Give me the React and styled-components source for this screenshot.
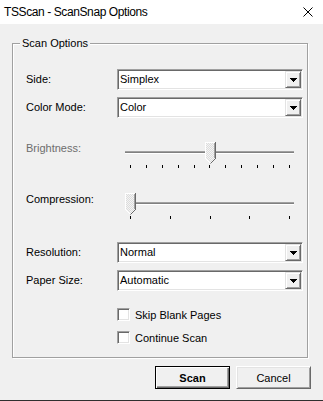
import React, { useId } from "react";
import styled, { createGlobalStyle, css } from "styled-components";

const GlobalStyle = createGlobalStyle`
  html, body {
    margin: 0;
    padding: 0;
    background: #f0f0f0;
  }
  body {
    font-family: "Liberation Sans", Arial, sans-serif;
    font-size: 11px;
    color: #000;
  }
  * {
    box-sizing: border-box;
  }
`;

const Window = styled.div`
  width: 323px;
  height: 401px;
  background: #f0f0f0;
  border-bottom: 1px solid #2f2f2f;
  display: flex;
  flex-direction: column;
`;

const TitleBar = styled.div`
  height: 24px;
  background: #fff;
  display: flex;
  align-items: center;
  justify-content: space-between;
  padding: 0 10px 0 4px;
`;

const Title = styled.span`
  font-size: 12px;
  letter-spacing: -0.4px;
  color: #000;
`;

const Body = styled.div`
  padding: 13px 15px 0 12px;
`;

const GroupBox = styled.fieldset`
  margin: 0;
  padding: 0;
  min-width: 0;
  border: 1px solid #a0a0a0;
  box-shadow: 1px 1px 0 #fff, inset 1px 1px 0 #fff;
`;

const Legend = styled.legend`
  margin-left: 7px;
  padding: 0 2px;
  line-height: 13px;
  background: #f0f0f0;
`;

const Rows = styled.div`
  display: flex;
  flex-direction: column;
  padding: 19px 4px 13px 13px;
`;

const Row = styled.div`
  display: grid;
  grid-template-columns: 91px 186px;
  align-items: ${p => (p.$top ? "start" : "center")};
  margin-top: ${p => p.$space || 0}px;
`;

const Label = styled.span`
  line-height: 13px;
  color: ${p => (p.$disabled ? "#6d6d6d" : "#000")};
`;

const Combo = styled.div`
  height: 21px;
  display: flex;
  background: #fff;
  padding: 1px;
  border: 1px solid;
  border-color: #a0a0a0 #fff #fff #a0a0a0;
  box-shadow: inset 1px 1px 0 #696969, inset -1px -1px 0 #e3e3e3;
`;

const ComboText = styled.span`
  flex: 1;
  padding-left: 1px;
  line-height: 17px;
`;

const DropButton = styled.span`
  width: 16px;
  height: 17px;
  display: flex;
  align-items: center;
  justify-content: center;
  background: #f0f0f0;
  border: 1px solid;
  border-color: #e3e3e3 #696969 #696969 #e3e3e3;
  box-shadow: inset 1px 1px 0 #fff, inset -1px -1px 0 #a0a0a0;
`;

const SliderBox = styled.div`
  position: relative;
  width: 169px;
  height: 28px;
  margin-left: 8px;
`;

const Track = styled.div`
  margin-top: 9px;
  height: 3px;
  border-top: 1px solid #a0a0a0;
  border-bottom: 1px solid #fff;
  background: #808080;
`;

const Ticks = styled.div`
  display: flex;
  justify-content: space-between;
  width: 160px;
  height: 3px;
  margin: 11px 0 0 5px;
`;

const Tick = styled.span`
  width: 1px;
  height: 3px;
  background: #000;
`;

const ThumbSvg = styled.svg`
  position: absolute;
  top: 0;
  display: block;
`;

const CheckRow = styled.label`
  display: flex;
  align-items: center;
  gap: 5px;
  height: 13px;
  margin-left: 91px;
  margin-top: ${p => p.$space || 0}px;
`;

const CheckBox = styled.span`
  width: 13px;
  height: 13px;
  background: #fff;
  border: 1px solid;
  border-color: #a0a0a0 #fff #fff #a0a0a0;
  box-shadow: inset 1px 1px 0 #696969, inset -1px -1px 0 #e3e3e3;
`;

const ButtonBar = styled.div`
  display: flex;
  justify-content: flex-end;
  gap: 6px;
  padding: 8px 12px 0 0;
`;

const Button = styled.button`
  width: 75px;
  height: 23px;
  padding: 0;
  font-family: "Liberation Sans", Arial, sans-serif;
  font-size: 11px;
  color: #000;
  background: #f0f0f0;
  ${p =>
    p.$default
      ? css`
          font-weight: bold;
          border: 1px solid #000;
          box-shadow: inset 1px 1px 0 #fff, inset -1px -1px 0 #696969,
            inset -2px -2px 0 #a0a0a0;
        `
      : css`
          border: 1px solid;
          border-color: #fff #696969 #696969 #fff;
          box-shadow: inset 1px 1px 0 #e3e3e3, inset -1px -1px 0 #a0a0a0;
        `}
`;

function ComboBox({ value }) {
  return (
    <Combo>
      <ComboText>{value}</ComboText>
      <DropButton>
        <svg width="7" height="4" viewBox="0 0 7 4" shapeRendering="crispEdges">
          <path d="M0 0H7V1H6V2H5V3H4V4H3V3H2V2H1V1H0Z" fill="#000" />
        </svg>
      </DropButton>
    </Combo>
  );
}

function Thumb({ left }) {
  const id = useId().replace(/:/g, "");
  return (
    <ThumbSvg width="11" height="22" viewBox="0 0 11 22" style={{ left }} shapeRendering="crispEdges">
      <defs>
        <pattern id={id} width="2" height="2" patternUnits="userSpaceOnUse">
          <rect width="2" height="2" fill="#f4f4f4" />
          <rect width="1" height="1" fill="#dcdcdc" />
          <rect x="1" y="1" width="1" height="1" fill="#dcdcdc" />
        </pattern>
      </defs>
      <path d="M0 0H11V16L5.5 21.5L0 16Z" fill={`url(#${id})`} />
      <path d="M0.5 16.5V0.5H10" stroke="#fff" fill="none" />
      <path d="M0.5 16.5L5 21" stroke="#fff" fill="none" shapeRendering="auto" />
      <path d="M10.5 0V16.5" stroke="#696969" fill="none" />
      <path d="M10.5 16.5L5.5 21.5" stroke="#696969" fill="none" shapeRendering="auto" />
      <path d="M9.5 1V16" stroke="#a0a0a0" fill="none" />
    </ThumbSvg>
  );
}

function Slider({ value, max }) {
  const ticks = Array.from({ length: max + 1 }, (_, i) => i);
  return (
    <SliderBox>
      <Track />
      <Ticks>
        {ticks.map(t => (
          <Tick key={t} />
        ))}
      </Ticks>
      <Thumb left={Math.round((value / max) * 159)} />
    </SliderBox>
  );
}

export default function App() {
  return (
    <>
      <GlobalStyle />
      <Window>
        <TitleBar>
          <Title>TSScan - ScanSnap Options</Title>
          <svg width="10" height="10" viewBox="0 0 10 10">
            <path d="M0.5 0.5L9.5 9.5M9.5 0.5L0.5 9.5" stroke="#000" strokeWidth="1" fill="none" />
          </svg>
        </TitleBar>
        <Body>
          <GroupBox>
            <Legend>Scan Options</Legend>
            <Rows>
              <Row>
                <Label>Side:</Label>
                <ComboBox value="Simplex" />
              </Row>
              <Row $space={7}>
                <Label>Color Mode:</Label>
                <ComboBox value="Color" />
              </Row>
              <Row $space={24} $top>
                <Label $disabled>Brightness:</Label>
                <Slider value={5} max={10} />
              </Row>
              <Row $space={23} $top>
                <Label>Compression:</Label>
                <Slider value={0} max={4} />
              </Row>
              <Row $space={21}>
                <Label>Resolution:</Label>
                <ComboBox value="Normal" />
              </Row>
              <Row $space={7}>
                <Label>Paper Size:</Label>
                <ComboBox value="Automatic" />
              </Row>
              <CheckRow $space={17}>
                <CheckBox />
                <span>Skip Blank Pages</span>
              </CheckRow>
              <CheckRow $space={10}>
                <CheckBox />
                <span>Continue Scan</span>
              </CheckRow>
            </Rows>
          </GroupBox>
        </Body>
        <ButtonBar>
          <Button $default>Scan</Button>
          <Button>Cancel</Button>
        </ButtonBar>
      </Window>
    </>
  );
}
